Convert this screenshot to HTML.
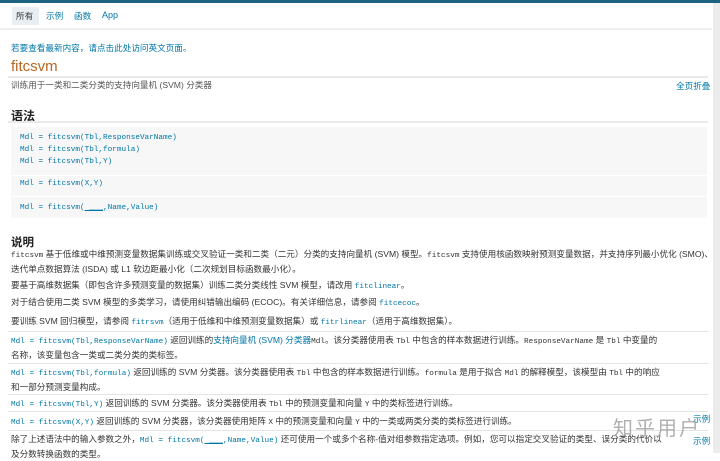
<!DOCTYPE html>
<html><head><meta charset="utf-8"><style>
*{margin:0;padding:0;box-sizing:border-box}
body{width:720px;height:453px;overflow:hidden;background:#fff;position:relative;font-family:"Liberation Sans","Noto Sans CJK SC",sans-serif;font-size:8.6px;color:#333}
.a{position:absolute;white-space:nowrap}
.m{font-family:"Liberation Mono",monospace;font-size:7.7px}
.c{color:#0076a8}
.l{position:absolute;height:1px;background:#e4e4e4;left:8px;width:700px}
.t{line-height:13px}
</style></head><body>
<div class="a" style="left:0;top:0;width:720px;height:3px;background:#1c6281"></div>
<div class="a" style="left:713px;top:3px;width:7px;height:450px;background:#ececec"></div>
<div class="a" style="left:12px;top:7px;width:27px;height:18px;background:#e8eef2"></div>
<div class="a" style="left:16px;top:10px;color:#333">所有</div>
<div class="a c" style="left:46px;top:10px">示例</div>
<div class="a c" style="left:74px;top:10px">函数</div>
<div class="a c" style="left:102px;top:10px;font-size:9px">App</div>
<div class="l" style="top:28px;left:0;width:712px;height:2px;background:#eee"></div>
<div class="a c" style="left:11px;top:42px">若要查看最新内容，请点击此处访问英文页面。</div>
<div class="a" style="left:11px;top:58px;font-size:15px;color:#b8651e">fitcsvm</div>
<div class="l" style="top:76px;height:2px;background:#eaeaea"></div>
<div class="a" style="left:11px;top:79px;color:#555">训练用于一类和二类分类的支持向量机 (SVM) 分类器</div>
<div class="a c" style="left:676px;top:80px">全页折叠</div>
<div class="a" style="left:11px;top:107px;font-size:12px;font-weight:bold;color:#222">语法</div>
<div class="l" style="top:121px;height:2px;background:#eaeaea"></div>
<div class="a" style="left:11px;top:127px;width:696px;height:48px;background:#f7f7f7"></div>
<div class="a" style="left:11px;top:176px;width:696px;height:20px;background:#f7f7f7"></div>
<div class="a" style="left:11px;top:197px;width:696px;height:21px;background:#f7f7f7"></div>
<div class="a m c" style="left:20px;top:132px;line-height:12px">Mdl = fitcsvm(Tbl,ResponseVarName)<br>Mdl = fitcsvm(Tbl,formula)<br>Mdl = fitcsvm(Tbl,Y)</div>
<div class="a m c" style="left:20px;top:180px">Mdl = fitcsvm(X,Y)</div>
<div class="a m c" style="left:20px;top:204px">Mdl = fitcsvm(<u>&nbsp;___</u>,Name,Value)</div>
<div class="a" style="left:11px;top:234px;font-size:11.5px;font-weight:bold;color:#222">说明</div>
<div class="a t" style="left:11px;top:248px"><span class="m">fitcsvm</span> 基于低维或中维预测变量数据集训练或交叉验证一类和二类（二元）分类的支持向量机 (SVM) 模型。<span class="m">fitcsvm</span> 支持使用核函数映射预测变量数据，并支持序列最小优化 (SMO)、<br>迭代单点数据算法 (ISDA) 或 L1 软边距最小化（二次规划目标函数最小化）。</div>
<div class="a" style="left:11px;top:279px">要基于高维数据集（即包含许多预测变量的数据集）训练二类分类线性 SVM 模型，请改用 <span class="m c">fitclinear</span>。</div>
<div class="a" style="left:11px;top:296px">对于结合使用二类 SVM 模型的多类学习，请使用纠错输出编码 (ECOC)。有关详细信息，请参阅 <span class="m c">fitcecoc</span>。</div>
<div class="a" style="left:11px;top:315px">要训练 SVM 回归模型，请参阅 <span class="m c">fitrsvm</span>（适用于低维和中维预测变量数据集）或 <span class="m c">fitrlinear</span>（适用于高维数据集）。</div>
<div class="l" style="top:331px"></div>
<div class="a t" style="left:11px;top:334px"><span class="m c">Mdl = fitcsvm(Tbl,ResponseVarName)</span> 返回训练的<span class="c">支持向量机 (SVM) 分类器</span><span class="m">Mdl</span>。该分类器使用表 <span class="m">Tbl</span> 中包含的样本数据进行训练。<span class="m">ResponseVarName</span> 是 <span class="m">Tbl</span> 中变量的<br>名称，该变量包含一类或二类分类的类标签。</div>
<div class="l" style="top:363px"></div>
<div class="a t" style="left:11px;top:366px"><span class="m c">Mdl = fitcsvm(Tbl,formula)</span> 返回训练的 SVM 分类器。该分类器使用表 <span class="m">Tbl</span> 中包含的样本数据进行训练。<span class="m">formula</span> 是用于拟合 <span class="m">Mdl</span> 的解释模型，该模型由 <span class="m">Tbl</span> 中的响应<br>和一部分预测变量构成。</div>
<div class="l" style="top:394px"></div>
<div class="a" style="left:11px;top:397px"><span class="m c">Mdl = fitcsvm(Tbl,Y)</span> 返回训练的 SVM 分类器。该分类器使用表 <span class="m">Tbl</span> 中的预测变量和向量 <span class="m">Y</span> 中的类标签进行训练。</div>
<div class="l" style="top:411px"></div>
<div class="a" style="left:11px;top:415px"><span class="m c">Mdl = fitcsvm(X,Y)</span> 返回训练的 SVM 分类器，该分类器使用矩阵 <span class="m">X</span> 中的预测变量和向量 <span class="m">Y</span> 中的一类或两类分类的类标签进行训练。</div>
<div class="l" style="top:430px"></div>
<div class="a t" style="left:11px;top:433px">除了上述语法中的输入参数之外，<span class="m c">Mdl = fitcsvm(<u>&nbsp;___</u>,Name,Value)</span> 还可使用一个或多个名称-值对组参数指定选项。例如，您可以指定交叉验证的类型、误分类的代价以<br>及分数转换函数的类型。</div>
<div class="a c" style="left:693px;top:413px">示例</div>
<div class="a c" style="left:693px;top:435px">示例</div>
<div class="a" style="left:613px;top:412px;font-size:20px;color:rgba(150,150,150,.75);letter-spacing:2px">知乎用户</div>
</body></html>
